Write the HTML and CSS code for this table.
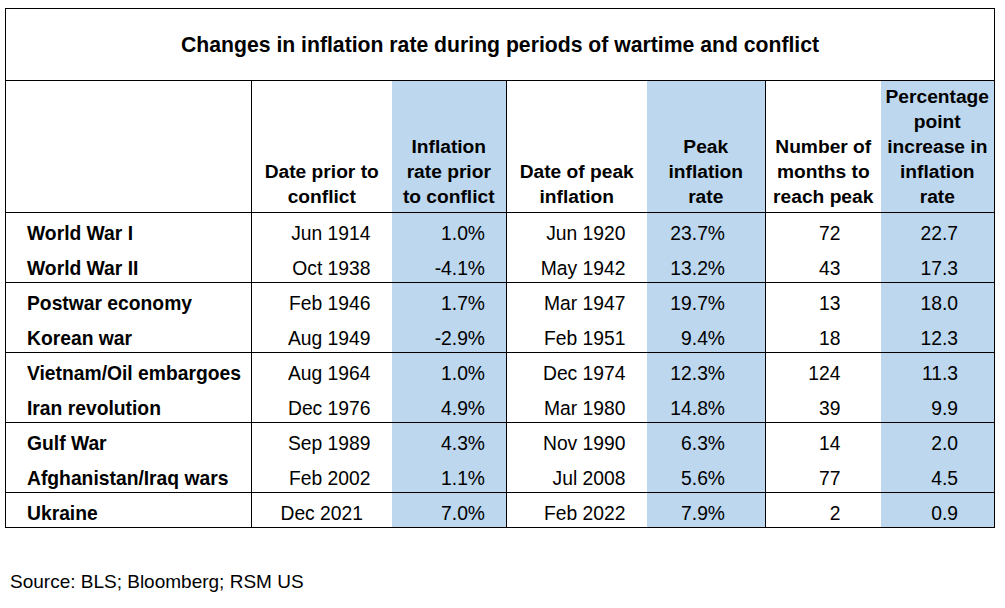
FILE: index.html
```html
<!DOCTYPE html>
<html>
<head>
<meta charset="utf-8">
<link rel="stylesheet" href="styles.css">
</head>
<body>
<table class="tbl">
  <colgroup>
    <col class="c0"><col class="c1"><col class="c2"><col class="c3"><col class="c4"><col class="c5"><col class="c6">
  </colgroup>
  <thead>
    <tr class="title-row"><th colspan="7" class="title">Changes in inflation rate during periods of wartime and conflict</th></tr>
    <tr class="head-row">
      <th class="sep"></th>
      <th>Date prior to<br>conflict</th>
      <th class="blue sep">Inflation<br>rate prior<br>to conflict</th>
      <th>Date of peak<br>inflation</th>
      <th class="blue sep">Peak<br>inflation<br>rate</th>
      <th>Number of<br>months to<br>reach peak</th>
      <th class="blue">Percentage<br>point<br>increase in<br>inflation<br>rate</th>
    </tr>
  </thead>
  <tbody>
    <tr class="grp"><td class="lbl sep">World War I</td><td class="d1">Jun 1914</td><td class="blue sep d2">1.0%</td><td class="d3">Jun 1920</td><td class="blue sep d4">23.7%</td><td class="d5">72</td><td class="blue d6">22.7</td></tr>
    <tr><td class="lbl sep">World War II</td><td class="d1">Oct 1938</td><td class="blue sep d2">-4.1%</td><td class="d3">May 1942</td><td class="blue sep d4">13.2%</td><td class="d5">43</td><td class="blue d6">17.3</td></tr>
    <tr class="grp"><td class="lbl sep">Postwar economy</td><td class="d1">Feb 1946</td><td class="blue sep d2">1.7%</td><td class="d3">Mar 1947</td><td class="blue sep d4">19.7%</td><td class="d5">13</td><td class="blue d6">18.0</td></tr>
    <tr><td class="lbl sep">Korean war</td><td class="d1">Aug 1949</td><td class="blue sep d2">-2.9%</td><td class="d3">Feb 1951</td><td class="blue sep d4">9.4%</td><td class="d5">18</td><td class="blue d6">12.3</td></tr>
    <tr class="grp"><td class="lbl sep">Vietnam/Oil embargoes</td><td class="d1">Aug 1964</td><td class="blue sep d2">1.0%</td><td class="d3">Dec 1974</td><td class="blue sep d4">12.3%</td><td class="d5">124</td><td class="blue d6">11.3</td></tr>
    <tr><td class="lbl sep">Iran revolution</td><td class="d1">Dec 1976</td><td class="blue sep d2">4.9%</td><td class="d3">Mar 1980</td><td class="blue sep d4">14.8%</td><td class="d5">39</td><td class="blue d6">9.9</td></tr>
    <tr class="grp"><td class="lbl sep">Gulf War</td><td class="d1">Sep 1989</td><td class="blue sep d2">4.3%</td><td class="d3">Nov 1990</td><td class="blue sep d4">6.3%</td><td class="d5">14</td><td class="blue d6">2.0</td></tr>
    <tr><td class="lbl sep">Afghanistan/Iraq wars</td><td class="d1">Feb 2002</td><td class="blue sep d2">1.1%</td><td class="d3">Jul 2008</td><td class="blue sep d4">5.6%</td><td class="d5">77</td><td class="blue d6">4.5</td></tr>
    <tr class="grp last"><td class="lbl sep">Ukraine</td><td class="d1 center">Dec 2021</td><td class="blue sep d2">7.0%</td><td class="d3">Feb 2022</td><td class="blue sep d4">7.9%</td><td class="d5">2</td><td class="blue d6">0.9</td></tr>
  </tbody>
</table>
<p class="source">Source: BLS; Bloomberg; RSM US</p>
</body>
</html>
```

FILE: styles.css
```css
html, body {
  margin: 0;
  padding: 0;
  background: #ffffff;
}

body {
  font-family: "Liberation Sans", Arial, sans-serif;
  color: #000000;
  padding: 8px 0 0 5px;
}

.tbl {
  border-collapse: collapse;
  table-layout: fixed;
  width: 989px;
  border: 1px solid #000;
  font-size: 19.3px;
}

.c0 { width: 246px; }
.c1 { width: 140px; }
.c2 { width: 115px; }
.c3 { width: 140px; }
.c4 { width: 119px; }
.c5 { width: 115px; }
.c6 { width: 114px; }

.tbl th,
.tbl td {
  padding: 0;
}

.title-row {
  height: 72px;
}

.title {
  font-size: 21.2px;
  font-weight: bold;
  text-align: center;
  vertical-align: middle;
  border-bottom: 1px solid #000;
  padding-top: 1px;
}

.head-row {
  height: 132px;
}

.head-row th {
  font-size: 19.2px;
  font-weight: bold;
  text-align: center;
  vertical-align: bottom;
  line-height: 25px;
  padding: 0 0 3px 0;
  white-space: nowrap;
}

.blue {
  background: #bdd7ee;
}

.sep {
  border-right: 1px solid #000;
}

.tbl tbody tr {
  height: 35px;
}

.tbl tbody td {
  text-align: right;
  vertical-align: bottom;
  line-height: 20px;
  padding-bottom: 3px;
  white-space: nowrap;
}

.tbl tbody tr.grp td {
  border-top: 1px solid #000;
  padding-bottom: 4px;
}

.tbl tbody tr.last td {
  padding-bottom: 3px;
}

.tbl td.lbl {
  text-align: left;
  font-weight: bold;
  padding-left: 21px;
}

.d1, .d2, .d3 { padding-right: 21px !important; }
.d4, .d5 { padding-right: 40px !important; }
.d6 { padding-right: 36px !important; }

.tbl td.center {
  text-align: center;
  padding-right: 0 !important;
}

.source {
  margin: 43px 0 0 5px;
  font-size: 19px;
  line-height: 22px;
}
```
